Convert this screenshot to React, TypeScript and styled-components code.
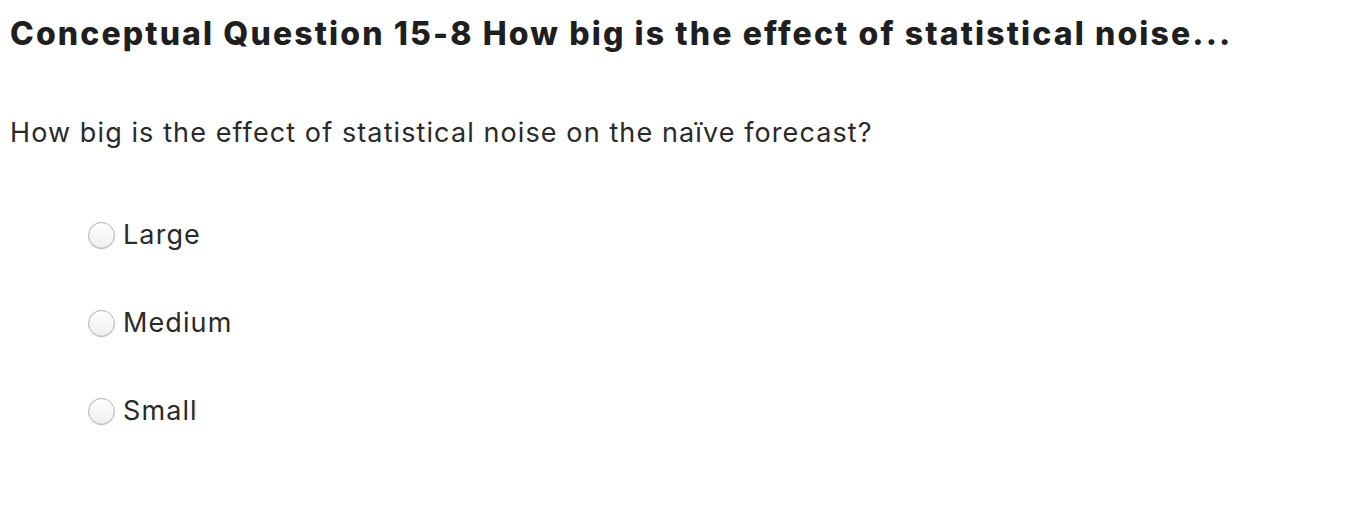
import React from "react";
import styled, { createGlobalStyle } from "styled-components";

const Global = createGlobalStyle`
  html, body { margin: 0; padding: 0; background: #fff; }
  body { font-family: Inter, "Liberation Sans", sans-serif; color: #222; font-variant-ligatures: none; }
`;

const Page = styled.div`
  padding: 12px 10px 0 10px;
`;

const Title = styled.h1`
  margin: 0;
  font-size: 32px;
  font-weight: 800;
  letter-spacing: 2.12px;
  line-height: 44px;
  color: #1f1f1f;
`;

const Prompt = styled.p`
  margin: 59px 0 0 0;
  font-size: 27px;
  letter-spacing: 1.1px;
  line-height: 36px;
  color: #2a2a2a;
`;

const Options = styled.div`
  display: flex;
  flex-direction: column;
  gap: 52px;
  margin: 66px 0 0 78px;
`;

const Option = styled.label`
  display: flex;
  align-items: center;
  gap: 8px;
  font-size: 27px;
  letter-spacing: 1.1px;
  line-height: 36px;
  color: #2a2a2a;
`;

const Radio = styled.span`
  width: 27px;
  height: 27px;
  border-radius: 50%;
  box-sizing: border-box;
  border: 1px solid #b0b0b0;
  background: linear-gradient(#ffffff, #eeeeee);
  box-shadow: inset 0 -1px 1px rgba(0,0,0,0.05), 0 1px 1px rgba(0,0,0,0.06);
  flex: none;
`;

const options = ["Large", "Medium", "Small"];

export default function App() {
  return (
    <>
      <Global />
      <Page>
        <Title>Conceptual Question 15-8 How big is the effect of statistical noise...</Title>
        <Prompt>How big is the effect of statistical noise on the naïve forecast?</Prompt>
        <Options>
          {options.map((o) => (
            <Option key={o}>
              <Radio />
              {o}
            </Option>
          ))}
        </Options>
      </Page>
    </>
  );
}
